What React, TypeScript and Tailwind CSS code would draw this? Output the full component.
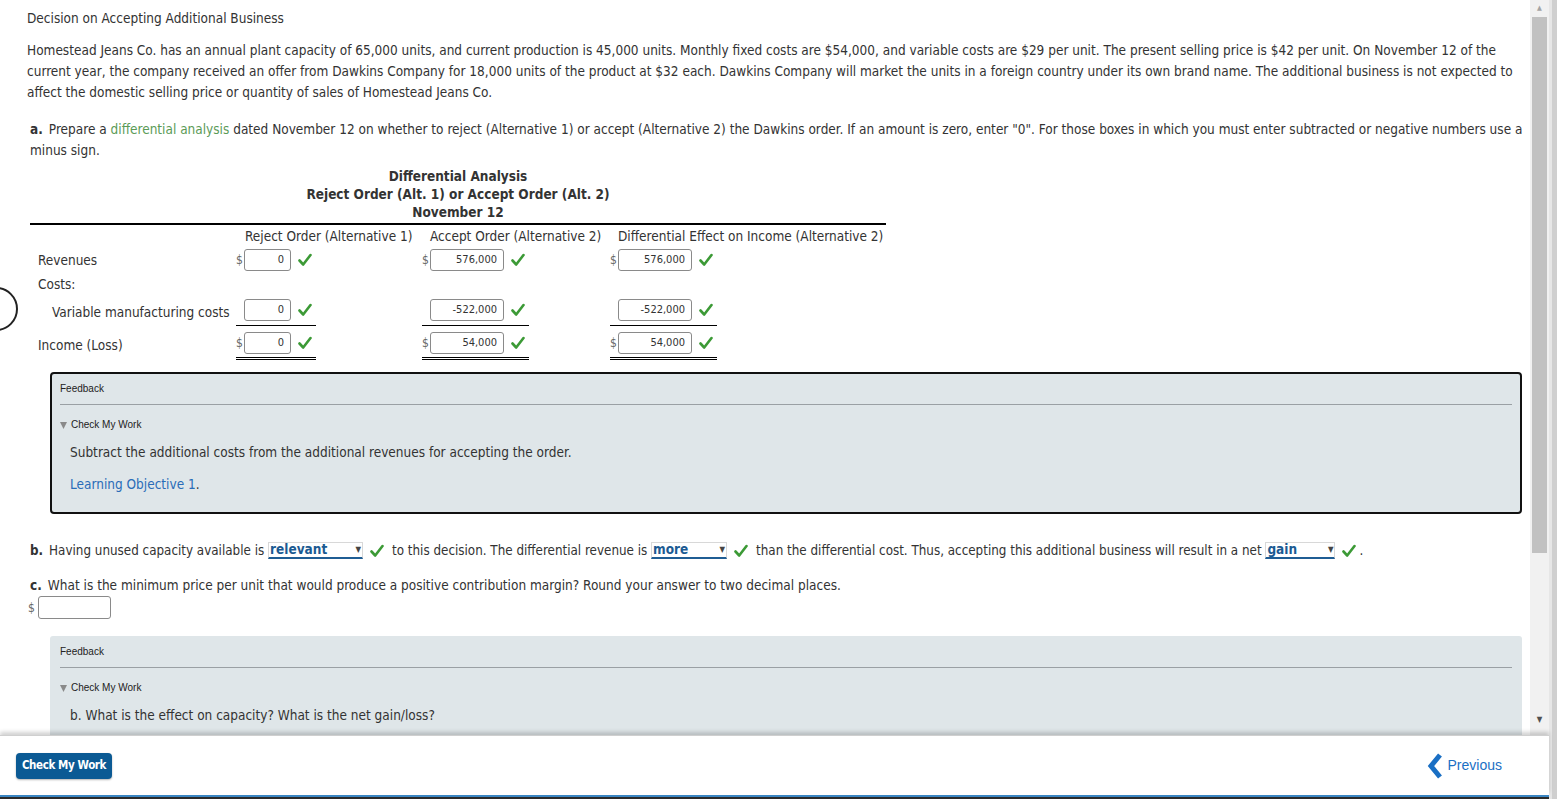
import React from "react";

function Check({ className = "" }: { className?: string }) {
  return (
    <svg width="14" height="14" viewBox="0 0 14 14" className={className}>
      <path d="M1.5 7.5 L5.2 11.5 L12.5 2" fill="none" stroke="#3c9a36" strokeWidth="2.6" strokeLinecap="round" strokeLinejoin="round" />
    </svg>
  );
}

function Tri() {
  return (
    <svg width="8" height="8" viewBox="0 0 8 8" className="mr-[3px]">
      <path d="M0 1 L7 1 L3.5 8 Z" fill="#8a8a8a" />
    </svg>
  );
}

function Box({ value, w }: { value: string; w: string }) {
  return (
    <div className={`${w} h-[22px] border border-[#8a8a8a] rounded-[3px] bg-white flex items-center justify-end pr-[6px] text-[11px] text-[#333]`}>
      {value}
    </div>
  );
}

function Cell({
  dollar,
  value,
  w,
  under,
}: {
  dollar: boolean;
  value: string;
  w: string;
  under?: "single" | "double";
}) {
  const u =
    under === "single"
      ? "border-b border-black pb-[4px]"
      : under === "double"
      ? "border-b-[3px] border-double border-black pb-[3px]"
      : "";
  return (
    <div className={`inline-flex items-center ${u}`}>
      <span className="w-[8px] text-[12px] text-[#666] leading-none">{dollar ? "$" : ""}</span>
      <Box value={value} w={w} />
      <Check className="ml-[7px] mr-[4px]" />
    </div>
  );
}

function Select({ value, w }: { value: string; w: string }) {
  return (
    <span className={`inline-flex items-center justify-between ${w} h-[17px] align-middle bg-white border-t border-x border-[#d8d8d8] border-b-2 border-b-[#1f5d94] px-[1px]`}>
      <span className="font-bold text-[#1b5a92] leading-none text-[13.5px]">{value}</span>
      <span className="text-[8px] text-[#444] leading-none">▼</span>
    </span>
  );
}

export default function App() {
  return (
    <div className="w-[1557px] h-[799px] flex overflow-hidden bg-white font-['DejaVu_Sans_Condensed','DejaVu_Sans',sans-serif] text-[13.5px] text-[#333] relative">
      <div className="w-[1549px] flex flex-col">
        {/* scroll area */}
        <div className="h-[735px] flex">
          <div className="flex-1 relative overflow-hidden pl-[27px] pr-[8px] pt-[8px]">
            <div className="leading-[21px]">Decision on Accepting Additional Business</div>
            <p className="mt-[11px] leading-[21px]">
              Homestead Jeans Co. has an annual plant capacity of 65,000 units, and current production is 45,000 units. Monthly fixed costs are $54,000, and variable costs are $29 per unit. The present selling price is $42 per unit. On November 12 of the current year, the company received an offer from Dawkins Company for 18,000 units of the product at $32 each. Dawkins Company will market the units in a foreign country under its own brand name. The additional business is not expected to affect the domestic selling price or quantity of sales of Homestead Jeans Co.
            </p>
            <p className="mt-[16px] pl-[3px] -mr-[7px] leading-[21px]">
              <b className="mr-[6px]">a.</b>Prepare a <span className="text-[#5b9b57]">differential analysis</span> dated November 12 on whether to reject (Alternative 1) or accept (Alternative 2) the Dawkins order. If an amount is zero, enter "0". For those boxes in which you must enter subtracted or negative numbers use a minus sign.
            </p>

            {/* table */}
            <div className="ml-[3px] mt-[6px] w-[856px]">
              <div className="text-center font-bold leading-[18px] pb-[2px]">
                <div>Differential Analysis</div>
                <div>Reject Order (Alt. 1) or Accept Order (Alt. 2)</div>
                <div>November 12</div>
              </div>
              <div className="border-t-2 border-black" />
              <div className="grid grid-cols-[206px_186px_188px_276px]">
                <div className="h-[19px]" />
                <div className="h-[19px] flex items-end pl-[9px] leading-[16px] whitespace-nowrap">Reject Order (Alternative 1)</div>
                <div className="h-[19px] flex items-end pl-[8px] leading-[16px] whitespace-nowrap">Accept Order (Alternative 2)</div>
                <div className="h-[19px] flex items-end pl-[8px] leading-[16px] whitespace-nowrap">Differential Effect on Income (Alternative 2)</div>

                <div className="h-[32px] flex items-center pl-[8px]">Revenues</div>
                <div className="h-[32px] flex items-center"><Cell dollar value="0" w="w-[47px]" /></div>
                <div className="h-[32px] flex items-center"><Cell dollar value="576,000" w="w-[74px]" /></div>
                <div className="h-[32px] flex items-center"><Cell dollar value="576,000" w="w-[74px]" /></div>

                <div className="h-[17px] flex items-center pl-[8px]">Costs:</div>
                <div />
                <div />
                <div />

                <div className="h-[33px] flex items-center pl-[22px] pt-[5px]">Variable manufacturing costs</div>
                <div className="h-[33px] flex items-end"><Cell dollar={false} value="0" w="w-[47px]" under="single" /></div>
                <div className="h-[33px] flex items-end"><Cell dollar={false} value="-522,000" w="w-[74px]" under="single" /></div>
                <div className="h-[33px] flex items-end"><Cell dollar={false} value="-522,000" w="w-[74px]" under="single" /></div>

                <div className="h-[34px] flex items-center pl-[8px] pt-[4px]">Income (Loss)</div>
                <div className="h-[34px] flex items-end"><Cell dollar value="0" w="w-[47px]" under="double" /></div>
                <div className="h-[34px] flex items-end"><Cell dollar value="54,000" w="w-[74px]" under="double" /></div>
                <div className="h-[34px] flex items-end"><Cell dollar value="54,000" w="w-[74px]" under="double" /></div>
              </div>
            </div>

            {/* feedback 1 */}
            <div className="ml-[23px] mt-[12px] h-[142px] border-2 border-[#111] rounded-[4px] bg-[#dfe6e9] px-[8px]">
              <div className="pt-[7px] h-[31px] text-[10px] font-['Liberation_Sans',Arial,sans-serif] text-[#222] border-b border-[#9aa0a4]">Feedback</div>
              <div className="mt-[12px] flex items-center text-[10px] font-['Liberation_Sans',Arial,sans-serif] text-[#222]">
                <Tri />Check My Work
              </div>
              <div className="pl-[10px] mt-[10px] leading-[20px]">Subtract the additional costs from the additional revenues for accepting the order.</div>
              <div className="pl-[10px] mt-[12px] leading-[20px]"><span className="text-[#2a6cb8]">Learning Objective 1</span>.</div>
            </div>

            {/* b */}
            <div className="mt-[26px] pl-[3px] leading-[21px] flex items-center whitespace-nowrap text-[13.3px]">
              <b className="mr-[6px]">b.</b>Having unused capacity available is&nbsp;<Select value="relevant" w="w-[95px]" />
              <Check className="ml-[7px] mr-[8px]" />to this decision. The differential revenue is&nbsp;<Select value="more" w="w-[76px]" />
              <Check className="ml-[7px] mr-[8px]" />than the differential cost. Thus, accepting this additional business will result in a net&nbsp;<Select value="gain" w="w-[70px]" />
              <Check className="ml-[7px] mr-[3px]" />.
            </div>

            {/* c */}
            <div className="mt-[14px] pl-[3px] leading-[21px]">
              <b className="mr-[6px]">c.</b>What is the minimum price per unit that would produce a positive contribution margin? Round your answer to two decimal places.
            </div>
            <div className="flex items-center mt-[0px] pl-[1px]">
              <span className="w-[10px] text-[12px] text-[#666]">$</span>
              <div className="w-[73px] h-[23px] border border-[#8a8a8a] rounded-[3px] bg-white" />
            </div>

            {/* feedback 2 */}
            <div className="ml-[23px] mt-[17px] h-[140px] rounded-[3px] bg-[#dfe6e9] px-[10px]">
              <div className="pt-[8px] h-[32px] text-[10px] font-['Liberation_Sans',Arial,sans-serif] text-[#222] border-b border-[#9aa0a4]">Feedback</div>
              <div className="mt-[12px] flex items-center text-[10px] font-['Liberation_Sans',Arial,sans-serif] text-[#222]">
                <Tri />Check My Work
              </div>
              <div className="pl-[10px] mt-[10px] leading-[20px]">b. What is the effect on capacity? What is the net gain/loss?</div>
            </div>

            {/* side nav circle */}
            <div className="absolute left-[-26px] top-[287px] w-[44px] h-[44px] rounded-full border-2 border-[#222] bg-white flex items-center justify-end pr-[14px]">
              <div className="w-[8px] h-[8px] border-l-2 border-b-2 border-[#222] rotate-45" />
            </div>
          </div>

          {/* scrollbar */}
          <div className="w-[19px] bg-[#f1f1f1] flex flex-col items-center">
            <div className="h-[17px] flex items-center justify-center text-[7px] text-[#a3a3a3]">▲</div>
            <div className="w-[15px] h-[536px] bg-[#c1c1c1]" />
            <div className="flex-1" />
            <div className="h-[30px] flex items-center justify-center text-[8px] text-[#505050]">▼</div>
          </div>
        </div>

        {/* footer */}
        <div className="h-[60px] bg-white shadow-[0_-3px_4px_rgba(0,0,0,0.18)] border-t border-[#cfcfcf] flex items-center justify-between pl-[16px] pr-[47px] relative z-10">
          <button className="h-[26px] w-[96px] rounded-[4px] bg-[#0b5a94] text-white font-bold text-[11.5px] tracking-[-0.4px] shadow-[0_1px_2px_rgba(0,0,0,0.3)]">
            Check My Work
          </button>
          <div className="flex items-center gap-[5px] text-[#1a6fc4] text-[14px]">
            <svg width="16" height="26" viewBox="0 0 16 26">
              <path d="M13 2 L4 13 L13 24" fill="none" stroke="#1a6fc4" strokeWidth="5" strokeLinejoin="miter" />
            </svg>
            <span className="font-['Liberation_Sans',Arial,sans-serif]">Previous</span>
          </div>
        </div>
        <div className="h-[4px] border-t-2 border-[#3b87c4] bg-[#2b2b2b]" />
      </div>
      <div className="w-[8px] flex">
        <div className="w-[3px] bg-[#e6e6e6]" />
        <div className="flex-1 bg-[#cfcfcf]" />
      </div>
    </div>
  );
}
